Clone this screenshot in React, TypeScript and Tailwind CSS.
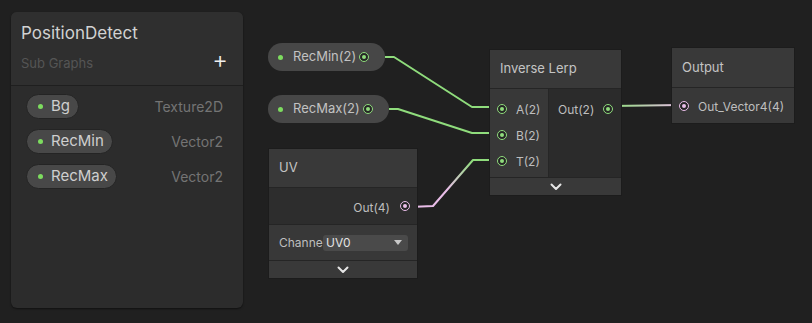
import React from 'react';

const GREEN = '#8fdc7c';
const PINK = '#e9bde8';

function Port({ color = GREEN }: { color?: string }) {
  return (
    <span
      className="flex h-[10px] w-[10px] items-center justify-center rounded-full border-[1.5px] bg-[#262626]"
      style={{ borderColor: color }}
    >
      <span className="h-[4px] w-[4px] rounded-full" style={{ backgroundColor: color }} />
    </span>
  );
}

function Chevron() {
  return (
    <svg width="12" height="8" viewBox="0 0 12 8" fill="none">
      <path d="M1.5 1.5 L6 6 L10.5 1.5" stroke="#e6e6e6" strokeWidth="2" strokeLinecap="round" strokeLinejoin="round" />
    </svg>
  );
}

function BoardPill({ name, type, width }: { name: string; type: string; width: string }) {
  return (
    <div className="flex h-[25px] items-center justify-between pl-[15px] pr-[20px]">
      <div className={`flex h-[25px] items-center rounded-full border border-[#242424] bg-[#484848] ${width}`}>
        <span className="ml-[11px] h-[5px] w-[5px] rounded-full bg-[#7ddc5f]" />
        <span className="ml-[8px] text-[15px] text-[#cfcfcf]">{name}</span>
      </div>
      <span className="text-[14px] text-[#747474]">{type}</span>
    </div>
  );
}

function GraphPill({ label, left, top, width }: { label: string; left: string; top: string; width: string }) {
  return (
    <div className={`absolute flex h-[28px] items-center rounded-full bg-[#474747] ${left} ${top} ${width}`}>
      <span className="ml-[10px] h-[5px] w-[5px] rounded-full bg-[#7ddc5f]" />
      <span className="ml-[10px] text-[13px] text-[#c2c2c2]">{label}</span>
      <span className="ml-auto mr-[16px]">
        <Port />
      </span>
    </div>
  );
}

export default function App() {
  return (
    <div
      className="relative h-[323px] w-[812px] overflow-hidden bg-[#202020]"
      style={{ fontFamily: 'Inter, "Noto Sans", sans-serif' }}
    >
      {/* blackboard */}
      <div className="absolute left-[11px] top-[12px] h-[296px] w-[232px] rounded-[6px] bg-[#2c2c2c] shadow-[0_1px_2px_rgba(0,0,0,0.5)]">
        <div className="relative h-[74px] border-b border-[#1f1f1f] bg-[#2f2f2f] rounded-t-[6px] px-[10px]">
          <div className="pt-[9px] text-[17px] text-[#d2d2d2]">PositionDetect</div>
          <div className="mt-[7px] text-[13px] text-[#555555]">Sub Graphs</div>
          <div className="absolute right-[15px] top-[36px] text-[24px] font-light leading-none text-[#f0f0f0]">+</div>
        </div>
        <div className="flex flex-col gap-[10px] pt-[8px]">
          <BoardPill name="Bg" type="Texture2D" width="w-[53px]" />
          <BoardPill name="RecMin" type="Vector2" width="w-[87px]" />
          <BoardPill name="RecMax" type="Vector2" width="w-[91px]" />
        </div>
      </div>

      {/* edges */}
      <svg className="absolute left-0 top-0" width="812" height="323">
        <defs>
          <linearGradient id="uvEdge" gradientUnits="userSpaceOnUse" x1="410" y1="207" x2="500" y2="160">
            <stop offset="0" stopColor={PINK} />
            <stop offset="0.4" stopColor={PINK} />
            <stop offset="0.75" stopColor={GREEN} />
            <stop offset="1" stopColor={GREEN} />
          </linearGradient>
          <linearGradient id="outEdge" gradientUnits="userSpaceOnUse" x1="612" y1="0" x2="682" y2="0">
            <stop offset="0" stopColor={GREEN} />
            <stop offset="1" stopColor={PINK} />
          </linearGradient>
        </defs>
        <path d="M385 57 L394 57 L472 107 L500 107" stroke={GREEN} strokeWidth="2" fill="none" strokeLinejoin="round" />
        <path d="M389 109 L398 109 L472 133 L500 133" stroke={GREEN} strokeWidth="2" fill="none" strokeLinejoin="round" />
        <path d="M410 207 L433 206 L473 160 L500 160" stroke="url(#uvEdge)" strokeWidth="2" fill="none" strokeLinejoin="round" />
        <path d="M612 106 L680 105" stroke="url(#outEdge)" strokeWidth="2" fill="none" />
      </svg>

      <GraphPill label="RecMin(2)" left="left-[268px]" top="top-[43px]" width="w-[117px]" />
      <GraphPill label="RecMax(2)" left="left-[268px]" top="top-[95px]" width="w-[121px]" />

      {/* UV node */}
      <div className="absolute left-[269px] top-[149px] w-[148px] bg-[#2d2d2d] shadow-[0_0_0_1px_#1c1c1c]">
        <div className="flex h-[39px] items-center border-b border-[#252525] bg-[#393939] pl-[10px] text-[13px] text-[#c4c4c4]">UV</div>
        <div className="relative flex h-[36px] items-center justify-end bg-[#2d2d2d] pr-[27px] text-[12px] text-[#bebebe]">
          <span className="mt-[4px]">Out(4)</span>
          <span className="absolute right-[7px] top-[13px]">
            <Port color={PINK} />
          </span>
        </div>
        <div className="flex h-[36px] items-center border-t border-[#252525] bg-[#383838] pl-[10px] text-[12px] text-[#bebebe]">
          <span className="w-[44px] whitespace-nowrap">Channe</span>
          <div className="flex h-[16px] w-[85px] items-center justify-between rounded-[3px] bg-[#4a4a4a] pl-[3px] pr-[6px] text-[12px] text-[#e2e2e2]">
            UV0
            <svg width="8" height="5" viewBox="0 0 8 5">
              <path d="M0 0 L8 0 L4 5 Z" fill="#c8c8c8" />
            </svg>
          </div>
        </div>
        <div className="flex h-[18px] items-center justify-center border-t border-[#252525] bg-[#393939]">
          <Chevron />
        </div>
      </div>

      {/* Inverse Lerp node */}
      <div className="absolute left-[490px] top-[50px] w-[131px] bg-[#2b2b2b] shadow-[0_0_0_1px_#1c1c1c]">
        <div className="flex h-[39px] items-center border-b border-[#252525] bg-[#393939] pl-[10px] text-[13px] text-[#c4c4c4]">
          Inverse Lerp
        </div>
        <div className="flex h-[88px]">
          <div className="flex w-[59px] flex-col gap-[13px] border-r border-[#262626] bg-[#383838] pt-[13px] text-[12px] text-[#bebebe]">
            {['A(2)', 'B(2)', 'T(2)'].map((l) => (
              <div key={l} className="flex h-[13px] items-center">
                <span className="ml-[7px]"><Port /></span>
                <span className="ml-[9px] mt-[3px]">{l}</span>
              </div>
            ))}
          </div>
          <div className="flex flex-1 items-start pt-[13px] text-[12px] text-[#bebebe]">
            <div className="flex h-[13px] w-full items-center">
              <span className="ml-[9px] mt-[3px]">Out(2)</span>
              <span className="ml-auto mr-[8px]"><Port /></span>
            </div>
          </div>
        </div>
        <div className="flex h-[18px] items-center justify-center border-t border-[#252525] bg-[#393939]">
          <Chevron />
        </div>
      </div>

      {/* Output node */}
      <div className="absolute left-[672px] top-[48px] w-[122px] bg-[#383838] shadow-[0_0_0_1px_#1c1c1c]">
        <div className="flex h-[40px] items-center border-b border-[#252525] bg-[#393939] pl-[10px] text-[13px] text-[#c4c4c4]">
          Output
        </div>
        <div className="flex h-[35px] items-center text-[12px] text-[#bebebe]">
          <span className="ml-[7px]"><Port color={PINK} /></span>
          <span className="ml-[9px] mt-[3px]">Out_Vector4(4)</span>
        </div>
      </div>
    </div>
  );
}
